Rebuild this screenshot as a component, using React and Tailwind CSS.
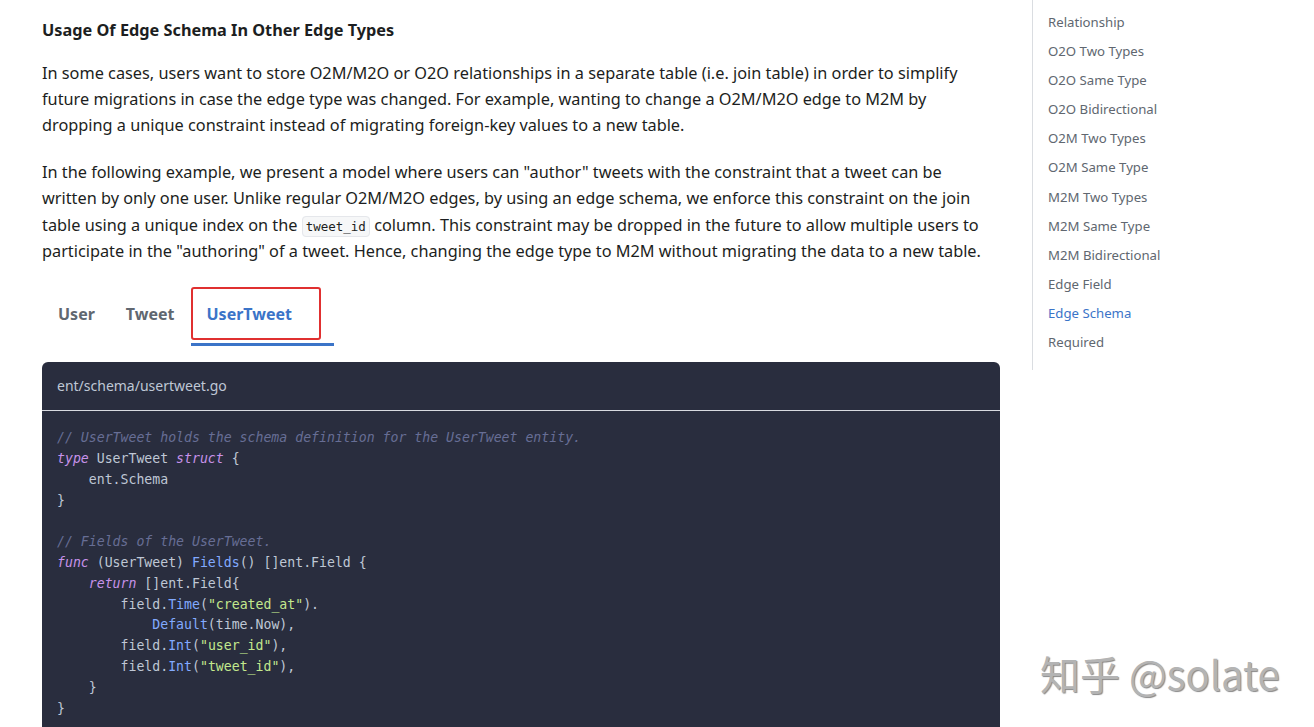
const sans = { fontFamily: '"Noto Sans", "Open Sans", sans-serif' }

const toc = [
  'Relationship',
  'O2O Two Types',
  'O2O Same Type',
  'O2O Bidirectional',
  'O2M Two Types',
  'O2M Same Type',
  'M2M Two Types',
  'M2M Same Type',
  'M2M Bidirectional',
  'Edge Field',
  'Edge Schema',
  'Required',
]

const C = ({ children }) => <span className="italic text-[#676e95]">{children}</span>
const K = ({ children }) => <span className="italic text-[#c792ea]">{children}</span>
const F = ({ children }) => <span className="text-[#82aaff]">{children}</span>
const S = ({ children }) => <span className="text-[#c3e88d]">{children}</span>

function Code() {
  return (
    <pre className="px-[15px] pt-[17px] pb-4 text-[13.2px] leading-[20.8px] text-[#bfc7d5]" style={{ fontFamily: '"DejaVu Sans Mono", "Liberation Mono", monospace' }}>
      <C>// UserTweet holds the schema definition for the UserTweet entity.</C>{'\n'}
      <K>type</K> UserTweet <K>struct</K> {'{'}{'\n'}
      {'    '}ent.Schema{'\n'}
      {'}'}{'\n'}
      {'\n'}
      <C>// Fields of the UserTweet.</C>{'\n'}
      <K>func</K> (UserTweet) <F>Fields</F>() []ent.Field {'{'}{'\n'}
      {'    '}<K>return</K> []ent.Field{'{'}{'\n'}
      {'        '}field.<F>Time</F>(<S>"created_at"</S>).{'\n'}
      {'            '}<F>Default</F>(time.Now),{'\n'}
      {'        '}field.<F>Int</F>(<S>"user_id"</S>),{'\n'}
      {'        '}field.<F>Int</F>(<S>"tweet_id"</S>),{'\n'}
      {'    '}{'}'}{'\n'}
      {'}'}
    </pre>
  )
}

export default function App() {
  return (
    <div className="relative h-[727px] w-[1314px] overflow-hidden bg-white" style={sans}>
      <div className="flex">
        <main className="w-[958px] ml-[42px] pt-[18px]">
          <h3 className="text-[16.3px] font-bold text-[#1c1e21] leading-[24px]">Usage Of Edge Schema In Other Edge Types</h3>
          <p className="mt-[18px] text-[16.3px] leading-[26px] text-[#1c1e21]">
            In some cases, users want to store O2M/M2O or O2O relationships in a separate table (i.e. join table) in order to simplify
            future migrations in case the edge type was changed. For example, wanting to change a O2M/M2O edge to M2M by
            dropping a unique constraint instead of migrating foreign-key values to a new table.
          </p>
          <p className="mt-[21px] text-[16.3px] leading-[26.3px] text-[#1c1e21]">
            In the following example, we present a model where users can "author" tweets with the constraint that a tweet can be
            written by only one user. Unlike regular O2M/M2O edges, by using an edge schema, we enforce this constraint on the join
            table using a unique index on the{' '}
            <code className="rounded-[4px] border border-[#e5e7eb] bg-[#f6f7f8] px-[3px] py-[2px] text-[12.5px] leading-none text-[#1c1e21]" style={{ fontFamily: '"DejaVu Sans Mono", monospace' }}>tweet_id</code>{' '}
            column. This constraint may be dropped in the future to allow multiple users to
            participate in the "authoring" of a tweet. Hence, changing the edge type to M2M without migrating the data to a new table.
          </p>
          <div className="mt-[26px] flex text-[16px] font-bold leading-[24px]">
            <div className="px-4 pt-[12px] pb-[17px] text-[#606770]">User</div>
            <div className="pl-[15px] pr-4 pt-[12px] pb-[17px] text-[#606770]">Tweet</div>
            <div className="relative w-[143px] border-b-[3px] border-[#3b74c8] px-4 pt-[12px] pb-[17px] text-[#3b74c8]">
              UserTweet
              <div className="absolute left-0 top-[-3px] h-[53px] w-[130px] rounded-[3px] border-2 border-[#e03030]" />
            </div>
          </div>
          <div className="mt-[16px] rounded-t-[6px] bg-[#292d3e]">
            <div className="border-b border-[#d8dae0] px-[15px] py-[12px] text-[14px] leading-[24px] text-[#bfc7d5]">ent/schema/usertweet.go</div>
            <Code />
          </div>
        </main>
        <aside className="ml-[32px] h-[370px] border-l border-[#dadde1] pl-[15px] pt-[8px]">
          <ul className="text-[13.2px] leading-[29.1px]">
            {toc.map((t) => (
              <li key={t} className={t === 'Edge Schema' ? 'text-[#3b74c8]' : 'text-[#606770]'}>{t}</li>
            ))}
          </ul>
        </aside>
      </div>
      <div className="absolute left-[1040px] top-[646px] text-[40px] leading-[54px] text-[#b4b4b4]" style={{ fontFamily: '"Noto Sans CJK SC", "Noto Sans", sans-serif', textShadow: '1px 1px 1px #888' }}>
        知乎 @solate
      </div>
    </div>
  )
}
